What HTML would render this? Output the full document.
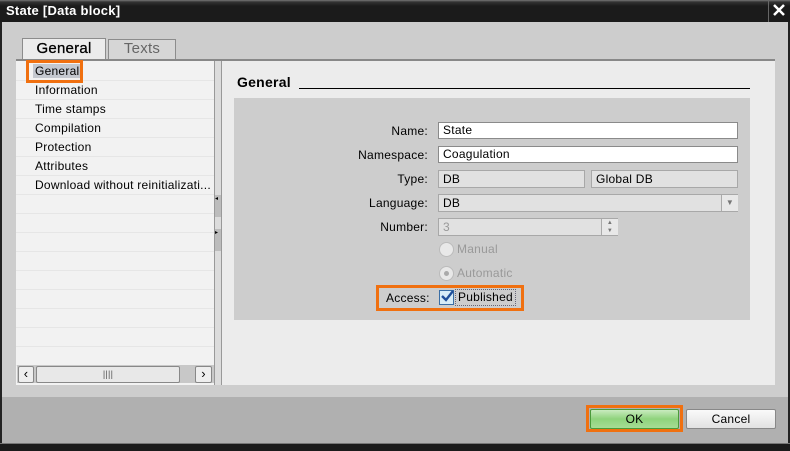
<!DOCTYPE html>
<html><head><style>
body{margin:0;width:790px;height:450px;position:relative;background:#cdcdcd;font-family:"Liberation Sans",sans-serif;font-size:12px;color:#000;overflow:hidden;letter-spacing:0.25px}
.a{position:absolute}
.title{left:0;top:0;width:790px;height:22px;background:linear-gradient(#777 0,#333 2px,#1b1b1b 6px,#1b1b1b);color:#fff;font-weight:bold;font-size:13px}
.lst div{position:absolute;left:0;width:198px;height:19px;border-bottom:1px solid #e6e6e6;line-height:19px;padding-left:19px;box-sizing:border-box;white-space:nowrap}
.lbl{text-align:right;width:120px;left:308px}
.in{background:#fff;border:1px solid #8a8a8a;height:17px;box-sizing:border-box;line-height:15px;padding-left:4px}
.ro{background:#e1e1e1;border:1px solid #a8a8a8;height:18px;box-sizing:border-box;line-height:16px;padding-left:4px}
.dis{color:#999}
.btn{height:20px;box-sizing:border-box;border:1px solid #888;text-align:center;line-height:18px;border-radius:2px}
</style></head><body>
<div class="a title"><span class="a" style="left:6px;top:3px">State [Data block]</span>
<div class="a" style="left:768px;top:0;width:1px;height:22px;background:#666"></div>
<svg class="a" style="left:772px;top:3px" width="14" height="14"><path d="M2 2L12 12M12 2L2 12" stroke="#fff" stroke-width="2.5"/></svg></div>
<div class="a" style="left:22px;top:38px;width:84px;height:23px;background:#ececec;border:1px solid #8c8c8c;border-bottom:none;box-sizing:border-box;font-size:15px;text-align:center;line-height:20px;-webkit-text-stroke:0.3px #000">General</div>
<div class="a" style="left:108px;top:39px;width:68px;height:20px;background:#d6d6d6;border:1px solid #8c8c8c;border-bottom:none;box-sizing:border-box;font-size:15px;color:#666;text-align:center;line-height:18px">Texts</div>
<div class="a" style="left:16px;top:59px;width:759px;height:2px;background:#888"></div>
<div class="a" style="left:16px;top:61px;width:198px;height:324px;background:#f2f2f2"></div>
<div class="a lst" style="left:16px;top:62px">
<div style="top:0"><span style="background:#c4c8cf;padding:0 2px;margin-left:-2px">General</span></div>
<div style="top:19px">Information</div><div style="top:38px">Time stamps</div><div style="top:57px">Compilation</div><div style="top:76px">Protection</div><div style="top:95px">Attributes</div><div style="top:114px">Download without reinitializati...</div>
<div style="top:133px"></div><div style="top:152px"></div><div style="top:171px"></div><div style="top:190px"></div><div style="top:209px"></div><div style="top:228px"></div><div style="top:247px"></div><div style="top:266px"></div><div style="top:285px"></div></div>
<div class="a" style="left:26px;top:60px;width:57px;height:23px;border:3px solid #f07010;box-sizing:border-box"></div>
<div class="a" style="left:17px;top:365px;width:197px;height:18px;background:#c8c8c8"></div>
<div class="a btn" style="left:18px;top:366px;width:16px;height:17px;background:#eee;line-height:14px;font-size:13px">‹</div>
<div class="a btn" style="left:36px;top:366px;width:144px;height:17px;background:#e8e8e8;line-height:14px;font-size:9px;color:#555">||||</div>
<div class="a btn" style="left:195px;top:366px;width:17px;height:17px;background:#eee;line-height:14px;font-size:13px">›</div>
<div class="a" style="left:214px;top:61px;width:8px;height:324px;background:#dcdcdc;border-left:1px solid #999;border-right:1px solid #999;box-sizing:border-box"></div>
<div class="a" style="left:215px;top:195px;width:6px;height:22px;background:#bcbcbc;font-size:6px">◂</div>
<div class="a" style="left:215px;top:229px;width:6px;height:22px;background:#bcbcbc;font-size:6px">▸</div>
<div class="a" style="left:222px;top:61px;width:553px;height:324px;background:#ececec"></div>
<div class="a" style="left:237px;top:74px;font-size:14px;font-weight:bold">General</div>
<div class="a" style="left:299px;top:88px;width:451px;height:1px;background:#000"></div>
<div class="a" style="left:234px;top:98px;width:516px;height:222px;background:#cdcdcd"></div>
<div class="a lbl" style="top:124px">Name:</div>
<div class="a in" style="left:438px;top:122px;width:300px">State</div>
<div class="a lbl" style="top:148px">Namespace:</div>
<div class="a in" style="left:438px;top:146px;width:300px">Coagulation</div>
<div class="a lbl" style="top:172px">Type:</div>
<div class="a ro" style="left:438px;top:170px;width:147px">DB</div>
<div class="a ro" style="left:591px;top:170px;width:147px">Global DB</div>
<div class="a lbl" style="top:196px">Language:</div>
<div class="a ro" style="left:438px;top:194px;width:300px">DB</div>
<div class="a" style="left:721px;top:195px;width:16px;height:16px;background:#e8e8e8;border-left:1px solid #aaa;font-size:8px;color:#777;text-align:center;line-height:16px">▼</div>
<div class="a lbl" style="top:220px">Number:</div>
<div class="a ro dis" style="left:438px;top:218px;width:180px">3</div>
<div class="a" style="left:601px;top:219px;width:16px;height:16px;background:#e8e8e8;border-left:1px solid #aaa;font-size:6px;color:#777;text-align:center;line-height:8px">▲<br>▼</div>
<div class="a" style="left:439px;top:242px;width:13px;height:13px;border-radius:50%;background:#e8e8e8;border:1px solid #bbb"></div>
<div class="a dis" style="left:457px;top:242px">Manual</div>
<div class="a" style="left:439px;top:266px;width:13px;height:13px;border-radius:50%;background:#e8e8e8;border:1px solid #bbb"></div>
<div class="a" style="left:444px;top:271px;width:5px;height:5px;border-radius:50%;background:#aaa"></div>
<div class="a dis" style="left:457px;top:266px">Automatic</div>
<div class="a" style="left:376px;top:285px;width:148px;height:26px;border:3px solid #f07010;box-sizing:border-box"></div>
<div class="a" style="left:386px;top:291px">Access:</div>
<div class="a" style="left:439px;top:290px;width:13px;height:13px;background:#d6ecf8;border:1px solid #3a6ea5"></div>
<svg class="a" style="left:440px;top:289px" width="14" height="14"><path d="M2 7L6 11L13 2" stroke="#1f4f9a" stroke-width="2.4" fill="none"/></svg>
<div class="a" style="left:455px;top:289px;width:61px;height:17px;border:1px dotted #667;box-sizing:border-box;line-height:15px;padding-left:2px">Published</div>
<div class="a" style="left:0;top:397px;width:790px;height:46px;background:#b0b0b0"></div>
<div class="a" style="left:0;top:443px;width:790px;height:7px;background:#1b1b1b;border-top:1px solid #777"></div>
<div class="a" style="left:586px;top:405px;width:97px;height:27px;border:3px solid #f07010;box-sizing:border-box"></div>
<div class="a btn" style="left:590px;top:409px;width:89px;height:20px;background:linear-gradient(#c9ebbf,#8fd37c 50%,#a6dc95);border-color:#4a9a3a">OK</div>
<div class="a btn" style="left:686px;top:409px;width:90px;height:20px;background:linear-gradient(#fafafa,#e2e2e2)">Cancel</div>
<div class="a" style="left:0;top:22px;width:2px;height:421px;background:#222"></div>
<div class="a" style="left:788px;top:22px;width:2px;height:421px;background:#222"></div>
</body></html>
